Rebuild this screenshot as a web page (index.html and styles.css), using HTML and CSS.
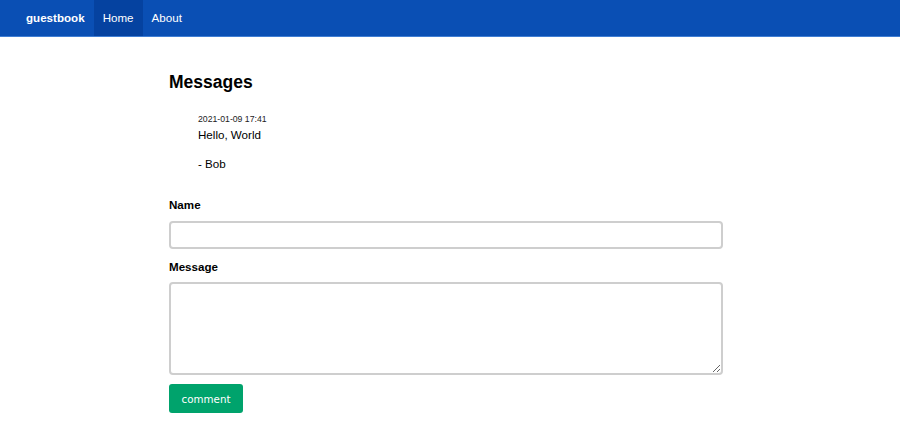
FILE: index.html
```html
<!DOCTYPE html>
<html lang="en">
<head>
    <meta charset="UTF-8">
    <title>guestbook</title>
    <link rel="stylesheet" href="styles.css">
</head>
<body>
    <nav class="navbar">
        <a class="brand" href="#">guestbook</a>
        <a class="nav-link active" href="#">Home</a>
        <a class="nav-link" href="#">About</a>
    </nav>

    <main class="container">
        <h1>Messages</h1>
        <div class="message">
            <div class="timestamp">2021-01-09 17:41</div>
            <p class="body">Hello, World</p>
            <p class="author">- Bob</p>
        </div>

        <form class="comment-form">
            <label for="name">Name</label>
            <input type="text" id="name">
            <label for="message">Message</label>
            <textarea id="message"></textarea>
            <button type="submit">comment</button>
        </form>
    </main>
</body>
</html>
```

FILE: styles.css
```css
* {
    margin: 0;
    padding: 0;
    box-sizing: border-box;
}

body {
    font-family: 'Liberation Sans', Arial, sans-serif;
    font-size: 11.6px;
    line-height: 14px;
    color: #000;
    background: #fff;
}

.navbar {
    display: flex;
    height: 37px;
    background: #0a4fb4;
    border-bottom: 1px solid #3f7ed4;
    padding-left: 17px;
}

.navbar a {
    color: #fff;
    text-decoration: none;
    display: flex;
    align-items: center;
    padding: 0 9px;
    font-size: 11.6px;
}

.navbar .brand {
    font-weight: bold;
}

.navbar .active {
    background: #0542a0;
}

.container {
    width: 554px;
    margin-left: 169px;
    padding-top: 35px;
}

h1 {
    font-size: 17.5px;
    line-height: 21px;
    font-weight: bold;
    margin-bottom: 21px;
}

.message {
    padding-left: 29px;
}

.timestamp {
    font-size: 8.7px;
    line-height: 10px;
    color: #222;
    margin-bottom: 4px;
}

.message .author {
    margin-top: 15px;
}

.comment-form {
    display: flex;
    flex-direction: column;
    margin-top: 27px;
}

.comment-form label {
    font-weight: bold;
    margin-bottom: 9px;
}

.comment-form input,
.comment-form textarea {
    width: 100%;
    border: 2px solid #cecece;
    border-radius: 4px;
    font-family: inherit;
    font-size: 11.6px;
    padding: 4px 6px;
}

.comment-form input {
    height: 28px;
    margin-bottom: 11px;
}

.comment-form textarea {
    height: 93px;
    margin-top: -1px;
    margin-bottom: 9px;
}

.comment-form button {
    align-self: flex-start;
    width: 74px;
    height: 29px;
    background: #00a36c;
    color: #fff;
    border: none;
    border-radius: 3px;
    font-family: 'DejaVu Sans', sans-serif;
    font-size: 10.3px;
}
```
